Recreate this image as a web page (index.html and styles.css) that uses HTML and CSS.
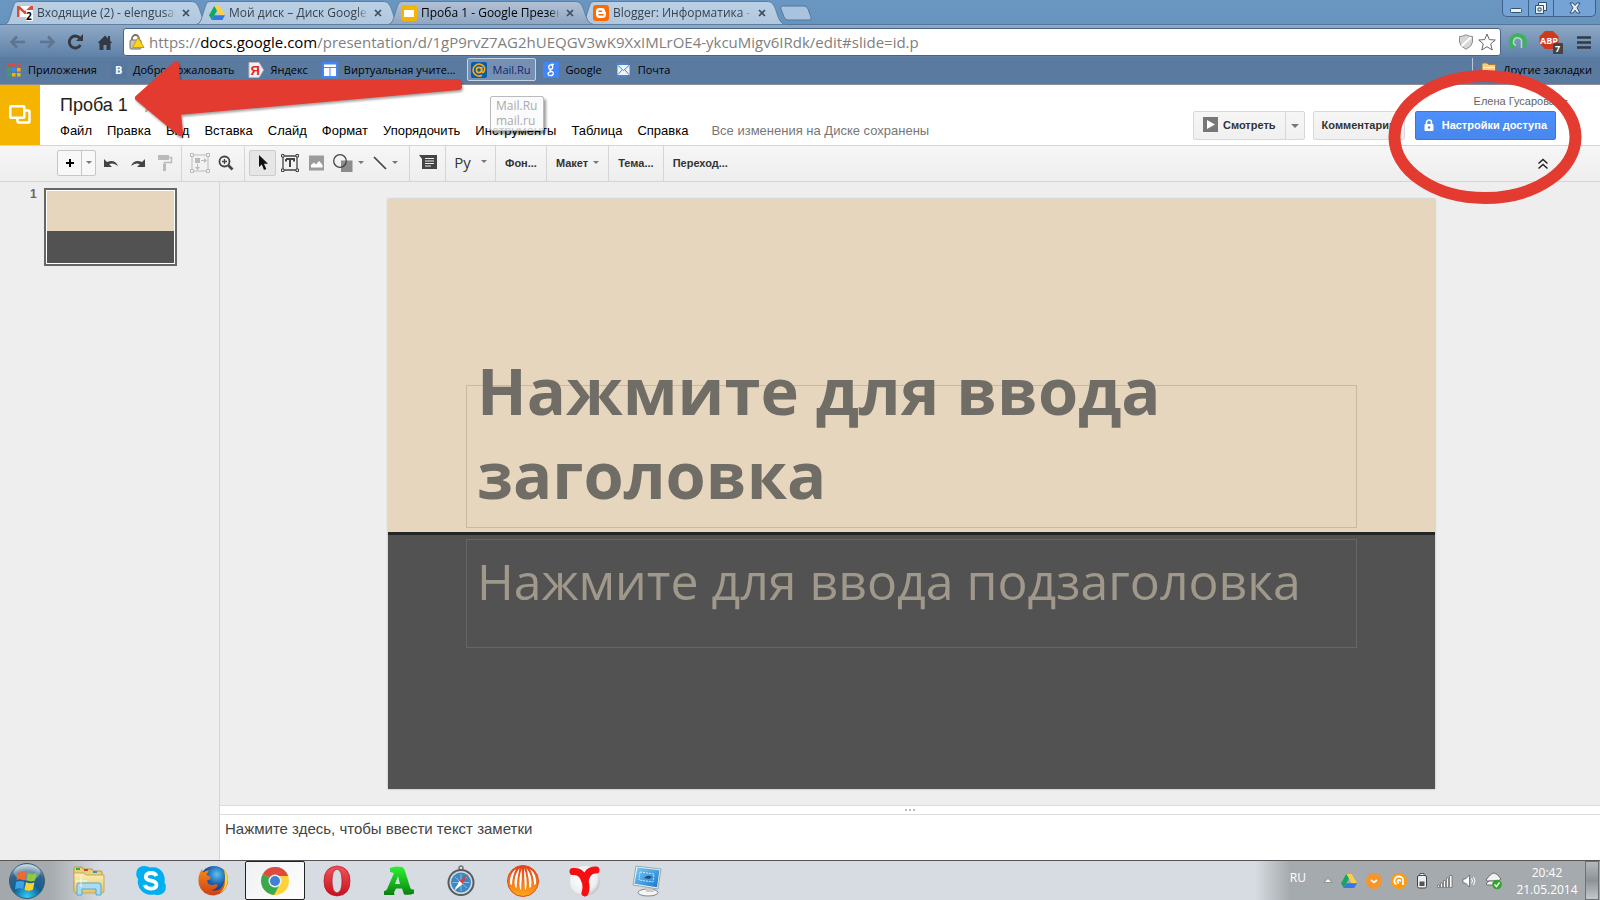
FILE: index.html
```html
<!DOCTYPE html>
<html lang="ru">
<head>
<meta charset="utf-8">
<title>Проба 1 - Google Презентации</title>
<link rel="stylesheet" href="styles.css">
</head>
<body>
<svg class="defs" width="0" height="0" aria-hidden="true">
  <defs>
    <linearGradient id="tabIdle" x1="0" y1="0" x2="0" y2="1"><stop offset="0" stop-color="#bbd0e5"/><stop offset="1" stop-color="#b0c7de"/></linearGradient>
    <linearGradient id="tabOn" x1="0" y1="0" x2="0" y2="1"><stop offset="0" stop-color="#b3c2d6"/><stop offset="1" stop-color="#8da6c3"/></linearGradient>
    <radialGradient id="orb" cx=".5" cy=".95" r=".9"><stop offset="0" stop-color="#2fd0f8"/><stop offset=".45" stop-color="#125e93"/><stop offset=".8" stop-color="#336688"/><stop offset="1" stop-color="#a9c5d6"/></radialGradient>
    <linearGradient id="folderG" x1="0" y1="0" x2="0" y2="1"><stop offset="0" stop-color="#fbefb4"/><stop offset="1" stop-color="#e3c66c"/></linearGradient>
    <linearGradient id="greenG" x1="0" y1="0" x2="0" y2="1"><stop offset="0" stop-color="#2fef33"/><stop offset=".55" stop-color="#18b81c"/><stop offset="1" stop-color="#0b7d10"/></linearGradient>
    <linearGradient id="orangeG" x1="0" y1="0" x2="0" y2="1"><stop offset="0" stop-color="#e8391d"/><stop offset="1" stop-color="#ffab17"/></linearGradient>
    <radialGradient id="ballG" cx=".4" cy=".4" r=".65"><stop offset="0" stop-color="#fff"/><stop offset=".75" stop-color="#eceef0"/><stop offset="1" stop-color="#b9bdc2"/></radialGradient>
    <linearGradient id="screenG" x1="0" y1="0" x2="1" y2="1"><stop offset="0" stop-color="#7ccaf5"/><stop offset="1" stop-color="#1778cf"/></linearGradient>
    <linearGradient id="operaG" x1="0" y1="0" x2="0" y2="1"><stop offset="0" stop-color="#f0545d"/><stop offset="1" stop-color="#c80f1c"/></linearGradient>
    <radialGradient id="foxG" cx=".6" cy=".3" r=".7"><stop offset="0" stop-color="#5ec3ee"/><stop offset=".5" stop-color="#1b5fae"/><stop offset="1" stop-color="#0d2c6b"/></radialGradient>
    <linearGradient id="fireG" x1="0" y1="0" x2="0" y2="1"><stop offset="0" stop-color="#f28a1e"/><stop offset="1" stop-color="#cf3f16"/></linearGradient>
    <symbol id="drive" viewBox="0 0 16 14"><path d="M5.3 0h5.3L16 9.3h-5.3z" fill="#ffcf48"/><path d="M5.3 0L8 4.7 2.7 14 0 9.3z" fill="#11a861"/><path d="M5.3 9.3H16L13.3 14H2.7z" fill="#3777e3"/></symbol>
    <symbol id="tabShape" viewBox="0 0 206 24"><path d="M0 24C5 23 5 19 8 10C10 3 11 1 15 1H187C192 1 194 4 196 10C199 19 200 23 206 24Z" /></symbol>
    <symbol id="close" viewBox="0 0 8 8"><path d="M1 1L7 7M7 1L1 7" stroke="#424c59" stroke-width="1.7" fill="none"/></symbol>
  </defs>
</svg>

<header class="browser">
  <div class="strip">
    <div class="tabs">
      <div class="tab">
        <svg class="tab-bg idle"><use href="#tabShape"/></svg>
        <svg class="fav" viewBox="0 0 16 16"><path d="M0 1h16v11H0z" fill="#fff"/><path d="M0 1h2.500L8 6l5.500-5H16v11h-2.500V4.500L8 9.500 2.500 4.500V12H0z" fill="#dd4a3c"/><path d="M9 5h7v11H9z" fill="#fff"/><text x="9" y="15" class="count">2</text></svg>
        <a href="#mail">Входящие (2) - elengusarova</a>
        <button class="x" aria-label="Закрыть"><svg width="8" height="8"><use href="#close"/></svg></button>
      </div>
      <div class="tab">
        <svg class="tab-bg idle"><use href="#tabShape"/></svg>
        <svg class="fav"><use href="#drive" y="1" width="16" height="14"/></svg>
        <a href="#drive-page">Мой диск – Диск Google</a>
        <button class="x" aria-label="Закрыть"><svg width="8" height="8"><use href="#close"/></svg></button>
      </div>
      <div class="tab on">
        <svg class="tab-bg"><use href="#tabShape"/></svg>
        <svg class="fav" viewBox="0 0 16 16"><rect width="16" height="16" rx="2" fill="#f4b400"/><path d="M3 5h10v7H3z" fill="#fff"/></svg>
        <a href="#slides">Проба 1 - Google Презентации</a>
        <button class="x" aria-label="Закрыть"><svg width="8" height="8"><use href="#close"/></svg></button>
      </div>
      <div class="tab">
        <svg class="tab-bg idle"><use href="#tabShape"/></svg>
        <svg class="fav" viewBox="0 0 16 16"><rect width="16" height="16" rx="3" fill="#ff6a00"/><path d="M6 3h3a3 3 0 0 1 3 3q0 1 1 1v2.500A3.500 3.500 0 0 1 9.500 13h-3A3.500 3.500 0 0 1 3 9.500V6a3 3 0 0 1 3-3z" fill="#fff"/><path d="M6 6.200h2.500M6 9.800h4" stroke="#ff6a00" stroke-width="1.400" stroke-linecap="round"/></svg>
        <a href="#blogger">Blogger: Информатика -</a>
        <button class="x" aria-label="Закрыть"><svg width="8" height="8"><use href="#close"/></svg></button>
      </div>
      <button class="newtab" aria-label="Новая вкладка"><svg width="32" height="16"><path d="M2 1H24Q27 1 28 4L31 12Q32 15 29 15H8Q5 15 4 12L1 4Q0 1 2 1Z" fill="#a9c3de" stroke="#56789b"/></svg></button>
    </div>
    <div class="winctl">
      <button aria-label="Свернуть"><svg width="12" height="12"><rect x=".5" y="6.500" width="11" height="4" rx="1" fill="#e8f0f8" stroke="#34506f"/></svg></button>
      <button aria-label="Развернуть"><svg width="14" height="14"><path d="M4.500 1.500h8v8h-3v3h-8v-8h3z" fill="#e8f0f8" stroke="#34506f"/><path d="M4.500 4.500h5v5M4 7h3v3H4z" fill="none" stroke="#34506f"/></svg></button>
      <button class="wide" aria-label="Закрыть окно"><svg width="12" height="12"><path d="M1 1h3l2 2.500L8 1h3L8 5.800 11 11H8L6 8.200 4 11H1l3-5.200z" fill="#e8f0f8" stroke="#34506f"/></svg></button>
    </div>
  </div>

  <div class="navbar">
    <button class="nav" aria-label="Назад"><svg width="18" height="16"><path d="M16 8H3M8 2.500L2.500 8 8 13.500" fill="none" stroke="#5d7590" stroke-width="2.600"/></svg></button>
    <button class="nav" aria-label="Вперёд"><svg width="18" height="16"><path d="M2 8h13M10 2.500L15.500 8 10 13.500" fill="none" stroke="#5d7590" stroke-width="2.600"/></svg></button>
    <button class="nav" aria-label="Обновить"><svg width="18" height="16"><path d="M13.500 11A6 6 0 1 1 12.800 4" fill="none" stroke="#333a43" stroke-width="2.800"/><path d="M16 0v7H9z" fill="#333a43"/></svg></button>
    <button class="nav" aria-label="Домой"><svg width="18" height="16"><path d="M2 8.500L9 1.500 12 4.500V2h2v4.500L16 8.500l-1.500 1V16h-4v-5h-3v5h-4V9.500z" fill="#333a43"/></svg></button>
    <div class="omni">
      <svg width="16" height="16"><path d="M3 8V4.500a3.500 3.500 0 0 1 7 0V8" fill="none" stroke="#77736a" stroke-width="1.800"/><rect x="1" y="6" width="11" height="9" rx="1" fill="#c9c5b8" stroke="#77736a"/><path d="M9 3.500L15 13.500H3.500z" fill="#ffd51c" stroke="#c99d00"/></svg>
      <div class="url" role="textbox" aria-label="Адрес" contenteditable="true" spellcheck="false">https://<b>docs.google.com</b>/presentation/d/1gP9rvZ7AG2hUEQGV3wK9XxIMLrOE4-ykcuMigv6IRdk/edit#slide=id.p</div>
      <svg width="16" height="16"><path d="M1.500 2.500Q5 2.500 8 .8 11 2.500 14.500 2.500V8Q14 12.500 8 15.300 2 12.500 1.500 8z" fill="#d6d6d6" stroke="#8d8d8d"/><path d="M13 3.500L3.500 12" stroke="#fff" stroke-width="2"/></svg>
      <svg width="18" height="18"><path d="M9 1l2.300 5.600 6 .4-4.600 3.900L14.200 17 9 13.700 3.800 17l1.500-6.100L.7 7l6-.4z" fill="#fff" stroke="#666"/></svg>
    </div>
    <button class="nav ext" aria-label="Avast"><svg width="18" height="18"><path d="M5 15A7 7 0 1 1 14.500 13.300" fill="none" stroke="#3bb35a" stroke-width="4"/><path d="M7 12.500A4 4 0 1 1 12.500 9.500V15" fill="none" stroke="#b4d6c8" stroke-width="1.600"/></svg></button>
    <button class="nav ext" aria-label="ABP"><svg width="24" height="24"><path d="M6 1h8l5.500 5.500v7L14 19H6L.5 13.500v-7z" fill="#cf3a1d"/><text x="1" y="14" class="abp">ABP</text><rect x="14" y="13" width="10" height="11" rx="1" fill="#444"/><text x="16" y="22" class="abp">7</text></svg></button>
    <button class="nav ext" aria-label="Меню"><svg width="14" height="14"><path d="M0 2.500h14M0 7.500h14M0 12.500h14" stroke="#333a43" stroke-width="2.600"/></svg></button>
  </div>

  <nav class="marks">
    <a href="#apps"><svg width="16" height="16"><path d="M1 1h3.500v3.500H1zM6 1h3.500v3.500H6zM11 1h3.500v3.500H11z" fill="#e8453c"/><path d="M1 6h3.500v3.500H1z" fill="#33a853"/><path d="M6 6h3.500v3.500H6z" fill="#4285f4"/><path d="M11 6h3.500v3.500H11zM6 11h3.500v3.500H6zM11 11h3.500v3.500H11z" fill="#f4b400"/><path d="M1 11h3.500v3.500H1z" fill="#33a853"/></svg>Приложения</a>
    <a href="#vk"><svg width="16" height="16"><rect width="16" height="16" fill="#54789f"/><text x="4" y="12" class="vk">B</text></svg>Добро пожаловать</a>
    <a href="#ya"><svg width="16" height="16"><path d="M1 .5h10l4.500 7.500-4.500 7.500H1z" fill="#f2f2f2" stroke="#bbb"/><text x="2.500" y="13" class="ya">Я</text></svg>Яндекс</a>
    <a href="#virt"><svg width="16" height="16"><rect width="16" height="16" fill="#4285f4"/><path d="M2 2.500h12V5H2zM2 6h5.500v8H2zM8.500 6H14v8H8.500z" fill="#fff"/></svg>Виртуальная учите...</a>
    <a href="#mailru" class="hot"><svg width="16" height="16"><rect width="16" height="16" rx="2" fill="#0b5ca8"/><circle cx="8" cy="8" r="2.600" fill="none" stroke="#fbab18" stroke-width="1.600"/><path d="M10.700 5v4q.5 2 2 1 1.500-2 .8-4.500A6 6 0 1 0 11 13.300" fill="none" stroke="#fbab18" stroke-width="1.600"/></svg>Mail.Ru</a>
    <a href="#google"><svg width="16" height="16"><rect width="16" height="16" rx="1" fill="#4285f4"/><ellipse cx="7.700" cy="5" rx="2" ry="2.200" fill="none" stroke="#fff" stroke-width="1.300"/><path d="M8 2.500h3M8 7.200q-2 1.300 0 2 2.500.8 2.300 2.500-.3 2-2.800 2-2.300 0-2.500-1.700 0-2 3.500-2.300" fill="none" stroke="#fff" stroke-width="1.300"/></svg>Google</a>
    <a href="#pochta"><svg width="16" height="16"><path d="M1 .5h10l4 7.500-4 7.500H1z" fill="#4a86c8"/><rect x="1.500" y="3" width="12" height="10" fill="#eef4fb"/><path d="M2 3.500L7.500 8.500 13 3.500M2 12.500L6 8M13 12.500L9 8" fill="none" stroke="#4a86c8"/></svg>Почта</a>
    <a href="#other" class="other"><svg width="16" height="16"><path d="M1 2.500Q1 1 2.500 1H6l1.500 1.500H14.500V15H1z" fill="#f6cf86" stroke="#a57a35"/><path d="M2 5.500h12" stroke="#fff0c8"/></svg>Другие закладки</a>
    <span class="tip">Mail.Ru<br>mail.ru</span>
  </nav>
</header>

<section class="docs">
  <a href="#home" class="logo" aria-label="Презентации"><svg width="22" height="20"><rect x="8.500" y="5.500" width="12" height="12" rx="1" fill="none" stroke="#fff" stroke-width="2.500"/><rect x="1.300" y="1.300" width="14" height="11.500" rx="1" fill="#f5b400" stroke="#fff" stroke-width="2.500"/></svg></a>
  <div class="heads">
    <div class="name"><h1>Проба 1</h1><svg width="44" height="16"><path d="M8 1l2 5 5 .4-4 3.300L12.500 15 8 12l-4.500 3L5 9.700 1 6.400 6 6z" fill="none" stroke="#aaa"/><path d="M28 3h5l1.500 2H43v10H28z" fill="#999"/></svg></div>
    <nav class="menu">
      <button>Файл</button><button>Правка</button><button>Вид</button><button>Вставка</button><button>Слайд</button><button>Формат</button><button>Упорядочить</button><button>Инструменты</button><button>Таблица</button><button>Справка</button>
      <span class="saved">Все изменения на Диске сохранены</span>
    </nav>
  </div>
  <div class="account">
    <a href="#user">Елена Гусарова<i class="caret"></i></a>
    <div class="acts">
      <div class="split"><button><svg width="15" height="15"><rect width="15" height="15" fill="#777"/><path d="M4 3l8 4.500L4 12z" fill="#fff"/></svg>Смотреть</button><button class="drop" aria-label="Ещё"><i class="caret"></i></button></div>
      <button class="btn">Комментарии</button>
      <button class="btn blue"><svg width="10" height="12"><path d="M2.500 6V3.500a2.500 2.500 0 0 1 5 0V6" fill="none" stroke="#fff" stroke-width="1.500"/><rect x=".5" y="5" width="9" height="7" rx="1" fill="#fff"/><circle cx="5" cy="8.500" r="1.200" fill="#4787ed"/></svg>Настройки доступа</button>
    </div>
  </div>
</section>

<div class="tools">
  <div class="grp first">
    <div class="plus"><button aria-label="Новый слайд"><svg width="8" height="8"><path d="M4 0v8M0 4h8" stroke="#000" stroke-width="2"/></svg></button><button class="drop" aria-label="Макеты"><i class="caret"></i></button></div>
    <button class="ic" aria-label="Отменить"><svg width="16" height="12"><path d="M1 2v8h8L6.200 7.300Q10 5 15 9 12 2 4 5z" fill="#444"/></svg></button>
    <button class="ic" aria-label="Повторить"><svg width="16" height="12"><path d="M15 2v8H7l2.800-2.700Q6 5 1 9 4 2 12 5z" fill="#444"/></svg></button>
    <button class="ic" aria-label="Формат"><svg width="16" height="18"><path d="M1 1h11v5H1z" fill="#bbb"/><path d="M12 3.500h2.500v5H7.500V11" fill="none" stroke="#bbb" stroke-width="1.500"/><path d="M6 10h3v7H6z" fill="#bbb"/></svg></button>
  </div>
  <div class="grp g2">
    <button class="ic" aria-label="Выровнять"><svg width="20" height="20"><path d="M2 2h16v16H2z" fill="none" stroke="#bbb"/><g fill="#f2f2f2" stroke="#bbb"><path d="M.5.500h3v3h-3zM16.500.500h3v3h-3zM.5 16.500h3v3h-3zM16.500 16.500h3v3h-3z"/></g><path d="M5 5h5v5H5zM11 7h3V5l3 2.500L14 10V8h-3zM7 11h1v3h2l-2.500 3L5 14h2z" fill="#bbb"/></svg></button>
    <button class="ic" aria-label="Масштаб"><svg width="16" height="16"><circle cx="6.500" cy="6.500" r="5" fill="none" stroke="#444" stroke-width="1.800"/><path d="M6.500 4v5M4 6.500h5" stroke="#444" stroke-width="1.300"/><path d="M10.500 10.500L14.500 14.500" stroke="#444" stroke-width="2.600"/></svg></button>
  </div>
  <div class="grp g3">
    <button class="ic sel" aria-label="Выбрать"><svg width="10" height="15"><path d="M1 0v12l2.800-2.600L6 15l2.300-1L6 8.800h4z" fill="#111"/></svg></button>
    <button class="ic" aria-label="Текст"><svg width="18" height="18"><path d="M2 2h14v14H2z" fill="none" stroke="#444" stroke-width="1.300"/><path d="M5 5h8v2.500M5 7.500V5M9 5v8" fill="none" stroke="#444" stroke-width="2"/><g fill="#eee" stroke="#444"><path d="M.5.500h2.500v2.500H.5zM15 .5h2.500v2.500H15zM.5 15h2.500v2.500H.5zM15 15h2.500v2.500H15z"/></g></svg></button>
    <button class="ic" aria-label="Изображение"><svg width="16" height="16"><rect y=".5" width="15" height="15" fill="#9b9b9b"/><path d="M2 12.500V10l3-2.500 2 2L10 6l3.500 4v2.500z" fill="#fff"/></svg></button>
    <button class="ic" aria-label="Фигура"><svg width="20" height="18"><path d="M8 6.500h11.500V18H8z" fill="#8c8c8c"/><circle cx="7" cy="7" r="6.300" fill="none" stroke="#444" stroke-width="1.300"/></svg><i class="caret"></i></button>
    <button class="ic line" aria-label="Линия"><svg width="14" height="14"><path d="M1 1l12 12" stroke="#444" stroke-width="1.700"/></svg><i class="caret"></i></button>
  </div>
  <div class="grp g4"><button class="ic" aria-label="Комментарий"><svg width="18" height="15"><path d="M0 0h18v14H3V4z" fill="#444"/><path d="M6 3.500h9M6 6h9M6 8.500h9M6 11h6" stroke="#eee"/></svg></button></div>
  <div class="grp g5"><button class="ic ru">Ру<i class="caret"></i></button></div>
  <div class="grp word"><button>Фон...</button></div>
  <div class="grp word"><button>Макет <i class="caret"></i></button></div>
  <div class="grp word"><button>Тема...</button></div>
  <div class="grp word last"><button>Переход...</button></div>
  <button class="fold" aria-label="Скрыть меню"><svg width="12" height="12"><path d="M1.500 5.500L6 1.500l4.500 4M1.500 10.500L6 6.500l4.500 4" fill="none" stroke="#222" stroke-width="1.500"/></svg></button>
</div>

<main class="work">
  <aside class="film"><span>1</span><button class="thumb" aria-label="Слайд 1"><i></i></button></aside>
  <section class="editor">
    <div class="stage">
      <article class="slide">
        <div class="upper"><h2 class="ph title">Нажмите для ввода заголовка</h2></div>
        <div class="lower"><p class="ph sub">Нажмите для ввода подзаголовка</p></div>
      </article>
    </div>
    <div class="grip"><i></i><i></i><i></i></div>
    <div class="notes">Нажмите здесь, чтобы ввести текст заметки</div>
  </section>
</main>

<footer class="taskbar">
  <button class="start" aria-label="Пуск"><svg width="38" height="38"><circle cx="19" cy="19" r="17.500" fill="url(#orb)" stroke="#3d5a70"/><ellipse cx="19" cy="10.500" rx="13" ry="8" fill="#fff" opacity=".3"/><path d="M10 11q4-2.500 8.500-.5L17 18q-4.500-2-8.500.2z" fill="#ef6a2e"/><path d="M20 11q4.500 2.500 9-.3L27 18.500q-4.500 2-8.500-.2z" fill="#94c83d"/><path d="M8 20q4-2 8.500-.3L15 27q-4-1.600-8 .5z" fill="#3ea2e6"/><path d="M18 20q4.500 2.300 8.500.2L25 27.500q-4 2.500-8.500.2z" fill="#fcd12c"/></svg></button>
  <button class="app" aria-label="Проводник"><svg width="34" height="32"><path d="M2 3q0-1 1-1h7l1 2h9l1 2h8q1 0 1 1v19H2z" fill="#e9d07f" stroke="#b8983f"/><path d="M4 3h4v2H4z" fill="#2eae3a"/><path d="M12 4h4v2h-4z" fill="#d8432d"/><path d="M21 6h4v2h-4z" fill="#3490d8"/><path d="M2 8h10l2 2h18v16q0 2-2 2H4q-2 0-2-2z" fill="url(#folderG)" stroke="#c6a953"/><path d="M5 30V20q0-2 2-2h20q2 0 2 2v10h-5v-6H10v6z" fill="#a9dcf3" stroke="#5ba7cc"/><path d="M9 10v12M3 16h12" stroke="#fff" opacity=".8"/></svg></button>
  <button class="app" aria-label="Skype"><svg width="32" height="32"><path d="M9 1q4 0 6 1.500Q24 1 28 8q2.500 5 1.500 9.500Q32 21 30 26q-3.500 5.500-11 3.500Q10 31 5 24 2 19 3 14 0 10 2 5q2.500-4 7-4z" fill="#00aff0"/><path d="M21.500 11Q20 7.800 15.800 8q-5 .3-5 4 0 2.700 5.200 3.700 5.500 1 5.500 4.200-.5 3.800-5.800 3.800Q11 23.500 9.800 20" fill="none" stroke="#fff" stroke-width="3.800"/></svg></button>
  <button class="app" aria-label="Firefox"><svg width="32" height="32"><circle cx="17" cy="15" r="14" fill="url(#foxG)"/><path d="M27 4q5 6 3.500 14Q28 29 17 30.500 5 30 2 20 0 11 5 4l1.500 3.500Q9 5 12 5.500L9.500 9.500l4 2.500q.5 2.500-3.500 3.500 1 5 6 4.500 3-1.500 5 0-2 5-7 5 10 2.500 13-7Q29 10 27 4z" fill="url(#fireG)"/><path d="M27 4q5 6 3.500 14Q29 25 23 28q5-5 5-11 .5-7-1-13z" fill="#fbd643"/></svg></button>
  <button class="app active" aria-label="Chrome"><svg width="30" height="30"><circle cx="15" cy="15" r="14" fill="#ffd43a"/><path d="M15 15L2.900 8A14 14 0 0 1 28 10H15z" fill="#dd4b3e"/><path d="M15 15L2.900 8A14 14 0 0 0 14 29l6-11z" fill="#39a84e"/><path d="M15 1A14 14 0 0 1 28 9.500H15z" fill="#dd4b3e"/><circle cx="15" cy="15" r="6.500" fill="#f1f3f4"/><circle cx="15" cy="15" r="5" fill="#3f82d5"/></svg></button>
  <button class="app" aria-label="Opera"><svg width="30" height="32"><path fill-rule="evenodd" d="M15 1q13 1 13 15T15 31Q2 30 2 16T15 1zm0 3q-5 1-5 12t5 12q5-1 5-12T15 4z" fill="url(#operaG)" stroke="#b5121d" stroke-width=".7"/></svg></button>
  <button class="app" aria-label="Амиго"><svg width="32" height="32"><path fill-rule="evenodd" d="M7 3q5-2.500 12-1 2 .5 3 4l5 16q.5 3 4 2.500v4q-4 2-10 1l-2-6h-6l-2 4 .5 2.500H1v-4q2.500 0 3.500-3L11 8 7 7zm8 8l-3 8h5z" fill="url(#greenG)"/></svg></button>
  <button class="app" aria-label="Safari"><svg width="30" height="32"><circle cx="15" cy="3" r="2" fill="none" stroke="#777" stroke-width="1.500"/><circle cx="15" cy="17.500" r="13.500" fill="#565b60"/><circle cx="15" cy="17.500" r="11.500" fill="#d5dade"/><circle cx="15" cy="17.500" r="10" fill="#3f86c4"/><path d="M15 9v17M6.500 17.500h17M9 12l12 11M9 23l12-11" stroke="#9ccbe9" stroke-width=".8"/><path d="M22 9l-5.500 10-3-3z" fill="#e43c2f"/><path d="M8 26l5.500-10 3 3z" fill="#fff"/></svg></button>
  <button class="app" aria-label="BitComet"><svg width="34" height="34"><circle cx="17" cy="17" r="15.500" fill="url(#orangeG)" stroke="#da521b"/><path d="M4 20Q3 10 10 5 6 13 6 21zM9 23Q7 12 13.500 4 11 14 10.500 24zM14 25Q12 14 16 4 16 15 15 26zM20 25Q22 14 18 4 18 15 19 26zM25 23Q27 12 20.500 4 23 14 23.500 24zM30 20Q31 10 24 5 28 13 28 21z" fill="#fff"/></svg></button>
  <button class="app" aria-label="Яндекс.Браузер"><svg width="34" height="32"><circle cx="17" cy="16" r="15" fill="url(#ballG)"/><path d="M5 6.500q9-1 12 10 2-12 11-11.500M17 16q2 6 0 12" fill="none" stroke="#f60f12" stroke-width="7" stroke-linecap="round"/></svg></button>
  <button class="app" aria-label="Рабочий стол"><svg width="30" height="32"><ellipse cx="16" cy="27.500" rx="10" ry="3.500" fill="#f5f5f5" stroke="#888"/><path d="M13 21h7l2 6h-8z" fill="#ccc"/><path d="M4 1l25 3-3 20L1 20z" fill="#eaf2f7" stroke="#9aa"/><path d="M5.500 2.500l22 2.700-2.500 17L2.500 18.700z" fill="url(#screenG)"/><path d="M8 7l14 2-1 8-14-2z" fill="none" stroke="#c7e9fb" stroke-dasharray="2 1"/><path d="M12 13q4-4 8-1l-3 2z" fill="#234f7a"/></svg></button>
  <div class="tray">
    <span class="lang">RU</span>
    <svg width="8" height="5"><path d="M0 4.500L4 .5l4 4z" fill="#fff" stroke="#555" stroke-width=".5"/></svg>
    <svg width="16" height="14"><use href="#drive" width="16" height="14"/></svg>
    <svg width="16" height="16"><circle cx="8" cy="8" r="8" fill="#f5962a"/><path d="M5 7l3 2.500L11 7" fill="none" stroke="#fff" stroke-width="1.700"/></svg>
    <svg width="16" height="16"><circle cx="8" cy="8" r="8" fill="#ff9a0b"/><path d="M5.500 11.500A4.300 4.300 0 1 1 12 8.500V12M9.500 8.500a1.500 1.500 0 1 0-1.500 1.500" fill="none" stroke="#fff" stroke-width="1.800"/></svg>
    <svg width="12" height="16"><rect x="1.500" y="2.500" width="9" height="12.500" rx="1.500" fill="#eee" stroke="#444"/><path d="M4 .5h4v2H4z" fill="#eee" stroke="#444" stroke-width=".8"/><path d="M3.500 8.500h5V13h-5z" fill="#555"/></svg>
    <svg width="16" height="14"><g fill="#f4f4f4" stroke="#555" stroke-width=".6"><path d="M.5 11h2v2.500h-2zM3.500 9h2v4.500h-2zM6.500 6.500h2v7h-2zM9.500 4h2v9.500h-2zM12.500 1.500h2.500v12h-2.500z"/></g></svg>
    <svg width="14" height="14"><path d="M1 5h2.500L7.500 1v12L3.500 9H1z" fill="#fff" stroke="#555" stroke-width=".7"/><path d="M9.500 4.500q2 2.500 0 5M11.500 3q3 4 0 8" fill="none" stroke="#fff"/></svg>
    <svg width="18" height="18"><path d="M1 8Q6 1 9 1q3 0 7 6l-3 2H2z" fill="#f2f2f2" stroke="#555" stroke-width=".8"/><path d="M1 12l3-3h8l-3 4H2z" fill="#f2f2f2" stroke="#555" stroke-width=".8"/><circle cx="12" cy="12.500" r="4.800" fill="#31a32f"/><path d="M9.500 12.500l2 2 3-4" fill="none" stroke="#fff" stroke-width="1.500"/></svg>
    <time>20:42<br>21.05.2014</time>
  </div>
  <button class="desk" aria-label="Показать рабочий стол"></button>
</footer>

<svg class="mark arrow" width="334" height="84" aria-hidden="true"><path d="M4 38L42 4L43 23L324 22L325 27L44 52L46 73Z"/></svg>
<svg class="mark ring" width="200" height="144" aria-hidden="true"><ellipse cx="100" cy="72" rx="90.500" ry="61"/></svg>
</body>
</html>
```

FILE: styles.css
```css
* { box-sizing: border-box; }
body {
  margin: 0;
  height: 100vh;
  display: flex;
  flex-direction: column;
  position: relative;
  overflow: hidden;
  background: #eee;
  font-family: "Liberation Sans", Arial, sans-serif;
  font-size: 13px;
  color: #000;
}
.defs { position: absolute; }
button {
  font: inherit;
  color: inherit;
  border: 0;
  background: none;
  padding: 0;
  margin: 0;
  display: flex;
  align-items: center;
  justify-content: center;
}
a { color: inherit; text-decoration: none; }
svg { display: block; flex: none; }
h1, h2, p { margin: 0; font-weight: normal; }
.caret {
  display: inline-block;
  border: 3px solid transparent;
  border-top-color: #777;
  border-bottom: 0;
}

/* browser frame */
.browser { flex: none; font-family: "Open Sans", "Noto Sans", sans-serif; font-size: 12px; }
.strip {
  height: 25px;
  display: flex;
  justify-content: space-between;
  background: linear-gradient(#6a97c2, #6694bd);
  border-bottom: 1px solid #56759a;
}
.tabs { display: flex; padding-left: 4px; }
.tab {
  position: relative;
  z-index: 0;
  width: 206px;
  height: 25px;
  margin-right: -14px;
  padding: 0 18px 0 13px;
  display: flex;
  align-items: center;
  gap: 4px;
  color: #39434f;
}
.tab.on { z-index: 1; color: #000; }
.tab-bg { position: absolute; left: 0; top: 0; width: 206px; height: 25px; fill: url(#tabOn); stroke: #5f7d9e; z-index: -1; }
.tab-bg.idle { fill: url(#tabIdle); }
.fav { width: 16px; height: 16px; }
.tab a {
  flex: 1;
  white-space: nowrap;
  overflow: hidden;
  mask-image: linear-gradient(90deg, #000 92%, transparent);
}
.x { width: 12px; height: 16px; }
.count { font: bold 10px "Open Sans", sans-serif; }
.newtab { align-self: flex-start; margin: 5px 0 0 8px; }
.winctl { display: flex; height: 17px; margin-right: 4px; border: 1px solid #3f628a; border-top: 0; border-radius: 0 0 5px 5px; background: #75a3d6; }
.winctl button { width: 25px; }
.winctl button + button { border-left: 1px solid #3f628a; }
.winctl .wide { width: 42px; }

.navbar {
  height: 32px;
  display: flex;
  align-items: center;
  padding: 2px 0 0 3px;
  background: linear-gradient(#8fa9c6, #5f81a8);
}
.nav { width: 29px; }
.nav:nth-child(4) { margin-right: 4px; }
.nav.ext { width: 33px; }
.omni {
  flex: 1;
  height: 28px;
  display: flex;
  align-items: center;
  gap: 4px;
  padding: 0 4px 0 5px;
  background: #fff;
  border: 1px solid #47658a;
  border-radius: 3px;
}
.url { flex: 1; font-size: 15px; color: #808080; white-space: nowrap; overflow: hidden; }
.url b { font-weight: normal; color: #000; }
.abp { font: bold 9px "Open Sans", sans-serif; fill: #fff; }
.vk { font: bold 11px "Open Sans", sans-serif; fill: #fff; }
.ya { font: bold 13px "Liberation Sans", sans-serif; fill: #e52620; }

.marks {
  position: relative;
  height: 28px;
  display: flex;
  align-items: center;
  padding: 0 8px 2px 6px;
  background: #5a7aa0;
  border-bottom: 1px solid #8f8f98;
  font-size: 11px;
}
.marks a { display: flex; align-items: center; gap: 6px; height: 23px; margin-right: 14px; white-space: nowrap; }
.marks .hot { border: 1px solid #c4d2e2; border-radius: 2px; background: #7590b2; color: #16266c; padding: 0 5px 0 3px; margin-right: 7px; margin-left: -3px; }
.marks .other { margin: 0 0 0 auto; padding-left: 8px; border-left: 1px solid #b9c8d9; }
.tip {
  position: absolute;
  left: 490px;
  top: 39px;
  z-index: 3;
  padding: 1px 6px 0 5px;
  height: 35px;
  line-height: 15px;
  font-size: 12px;
  color: #aaa;
  background: rgba(250, 250, 253, .8);
  border: 1px solid #bbb;
  border-radius: 2px;
  box-shadow: 2px 3px 3px rgba(0, 0, 0, .4);
}

/* document header */
.docs { flex: none; height: 60px; display: flex; background: #fff; }
.logo { width: 40px; display: flex; align-items: center; justify-content: center; background: #f5b400; }
.heads { flex: 1; padding: 9px 0 0 20px; }
.name { display: flex; align-items: center; gap: 14px; height: 22px; }
.name h1 { font-size: 18px; color: #222; }
.menu { display: flex; gap: 15px; align-items: center; height: 28px; white-space: nowrap; }
.saved { color: #777; margin-left: 8px; }
.account { padding-right: 44px; }
.account > a { display: flex; justify-content: flex-end; align-items: center; gap: 7px; height: 26px; padding-top: 6px; margin-right: -12px; font-size: 11px; color: #666; }
.acts { display: flex; font-size: 11px; font-weight: bold; color: #333; }
.split, .btn { height: 29px; border: 1px solid #d8d8d8; border-radius: 2px; background: linear-gradient(#f6f6f6, #f0f0f0); }
.split { display: flex; margin-right: 8px; }
.split button { padding: 0 9px 2px; gap: 5px; }
.split .drop { width: 19px; padding: 0; border-left: 1px solid #d8d8d8; }
.split .caret { border-width: 4px 4px 0; }
.btn { padding: 0 8px 2px; margin-right: 10px; }
.btn.blue { margin: 0; gap: 8px; color: #fff; border-color: #3079ed; background: linear-gradient(#4d90fe, #4787ed); }

.tools {
  flex: none;
  height: 37px;
  display: flex;
  align-items: center;
  border: 1px solid #d5d5d5;
  border-width: 1px 0;
  background: linear-gradient(#f6f6f6, #eee);
  font-size: 11px;
  font-weight: bold;
  color: #333;
}
.grp { height: 35px; display: flex; align-items: center; padding-bottom: 2px; border-right: 1px solid #d5d5d5; }
.first { padding-left: 57px; padding-right: 3px; }
.plus { display: flex; height: 26px; margin-right: 2px; border: 1px solid #c6c6c6; border-radius: 2px; background: #f8f8f8; }
.plus button { width: 23px; }
.plus .drop { width: 14px; border-left: 1px solid #c6c6c6; }
.ic { width: 26px; height: 26px; }
.first .ic + .ic { margin-left: 1px; }
.g2 { padding-left: 5px; padding-right: 5px; }
.g3 { padding-left: 4px; padding-right: 5px; }
.g3 .ic { width: 27px; }
.g3 .ic:nth-child(n+4) { width: 37px; gap: 5px; }
.g3 .line { gap: 11px; }
.sel { border: 1px solid #ccc; border-radius: 2px; background: #e6e6e6; }
.g4 { padding-left: 5px; padding-right: 4px; }
.g5 { padding-left: 6px; padding-right: 6px; }
.ru { width: 37px; gap: 10px; padding-bottom: 2px; font-family: "Open Sans", sans-serif; font-weight: normal; font-size: 15px; }
.word { padding-left: 9px; padding-right: 9px; }
.word button { gap: 5px; }
.last { border: 0; }
.fold { margin-left: auto; margin-right: 51px; }

/* workspace */
.work { flex: 1; display: flex; min-height: 0; }
.film { flex: none; width: 220px; padding: 6px 0 0 30px; display: flex; align-items: flex-start; gap: 7px; border-right: 1px solid #d5d5d5; font-size: 12px; line-height: 12px; font-weight: bold; color: #666; }
.thumb { width: 133px; height: 78px; padding: 1px; border: 2px solid #666; background: #fff; }
.thumb i { width: 100%; height: 100%; background: linear-gradient(#e6d6bd 56%, #525252 56%); }
.editor { flex: 1; min-width: 0; display: flex; flex-direction: column; }
.stage { flex: 1; min-height: 0; display: flex; justify-content: center; padding: 17px 0 16px 3px; }
.slide { height: 100%; aspect-ratio: 1047 / 590; display: flex; flex-direction: column; background: #525252; box-shadow: 0 0 2px #aaa; }
.upper { height: 57%; display: flex; align-items: flex-end; padding: 0 78px 4px; background: #e6d6bd; border-bottom: 3px solid #222625; }
.lower { flex: 1; padding: 4px 78px 0; }
.ph { border: 1px solid #c8b9a3; padding: 0 10px; font-family: "Open Sans", "Noto Sans", sans-serif; }
.title { width: 100%; height: 143px; display: flex; align-items: flex-end; padding-bottom: 11px; font-size: 65px; line-height: 84px; font-weight: bold; color: #706c66; }
.sub { height: 109px; padding-top: 11px; border-color: #666; font-size: 50px; line-height: 60px; color: #a0998b; white-space: nowrap; }
.grip { height: 10px; display: flex; align-items: center; justify-content: center; gap: 2px; background: #fff; border: 1px solid #ddd; border-width: 1px 0; }
.grip i { width: 2px; height: 2px; background: #bbb; }
.notes { height: 45px; padding: 5px; background: #fff; font-size: 15px; color: #444; }

/* taskbar */
.taskbar {
  flex: none;
  height: 40px;
  display: flex;
  align-items: center;
  border-top: 1px solid #555;
  background: linear-gradient(90deg, #a3a8ac, #a6abaf 50px, #d7dce3 100px, #d7dce3 calc(100% - 345px), #a5aaae calc(100% - 310px));
}
.start { width: 54px; margin-right: 4px; }
.app { width: 62px; height: 39px; }
.app.active { width: 60px; margin: 0 1px; border: 1px solid #222; border-radius: 2px; background: linear-gradient(135deg, #eef0f2, #fff); }
.tray { margin-left: auto; display: flex; align-items: center; gap: 9px; color: #fff; font-family: "Open Sans", sans-serif; font-size: 12px; }
.lang { margin: 0 9px 6px 0; }
.tray time { width: 70px; margin-right: 3px; text-align: center; line-height: 17px; }
.desk { width: 14px; height: 39px; margin: 0 1px 0 0; border: 1px solid #6d7276; background: linear-gradient(#b4b9bd, #8d9296 50%, #c4c8cb); }

/* annotations */
.mark { position: absolute; z-index: 5; pointer-events: none; filter: drop-shadow(1px 2px 1px rgba(0, 0, 0, .35)); }
.arrow { left: 134px; top: 60px; fill: #e43b30; stroke: #e43b30; stroke-width: 6px; stroke-linejoin: round; }
.ring { right: 15px; top: 65px; fill: none; stroke: #e43b30; stroke-width: 12px; filter: none; }
```
